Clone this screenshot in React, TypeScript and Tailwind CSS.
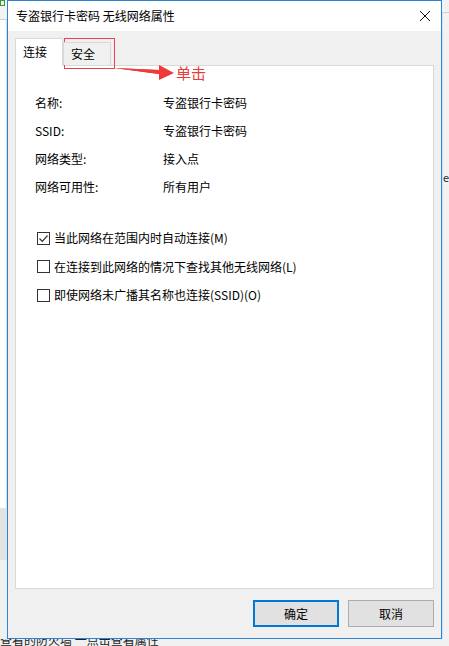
import React from "react";

const font = { fontFamily: "'Noto Sans CJK SC', 'Microsoft YaHei', sans-serif" };

function Check({ checked }: { checked?: boolean }) {
  return (
    <div className="w-[13px] h-[13px] border border-[#333333] bg-white flex items-center justify-center shrink-0">
      {checked && (
        <svg width="11" height="11" viewBox="0 0 11 11">
          <path d="M1.5 5.5 L4.3 8.3 L9.5 2.5" fill="none" stroke="#333" strokeWidth="1.2" />
        </svg>
      )}
    </div>
  );
}

export default function App() {
  const rows = [
    ["名称:", "专盗银行卡密码"],
    ["SSID:", "专盗银行卡密码"],
    ["网络类型:", "接入点"],
    ["网络可用性:", "所有用户"],
  ];
  const checks: [string, boolean][] = [
    ["当此网络在范围内时自动连接(M)", true],
    ["在连接到此网络的情况下查找其他无线网络(L)", false],
    ["即使网络未广播其名称也连接(SSID)(O)", false],
  ];
  return (
    <div className="w-[449px] h-[646px] overflow-hidden bg-[#f0f0f0] flex flex-col text-[12px] text-black" style={font}>
      <div className="flex h-[639px]">
        {/* left background strip */}
        <div className="w-[7px] flex flex-col bg-[#f3f3f3]">
          <div className="h-[20px] border-b border-[#d0d0d0] relative">
            <div className="absolute left-0 top-0 w-[5px] h-[6px] border border-[#3a9a3a] bg-[#e8f4e8]" />
          </div>
          <div className="h-[488px] bg-white border-r border-[#dcdcdc]" />
          <div className="h-[52px] bg-[#e2e2e2]" />
          <div className="flex-1 bg-[#f0f0f0]" />
        </div>
        {/* dialog */}
        <div className="w-[435px] border border-[#2b85d2] flex flex-col bg-[#f0f0f0] relative">
          <div className="h-[30px] bg-white flex items-center justify-between pl-[8px] pr-[10px]">
            <span className="text-[12px]">专盗银行卡密码 无线网络属性</span>
            <svg width="12" height="12" viewBox="0 0 12 12">
              <path d="M1 1 L11 11 M11 1 L1 11" stroke="#111" strokeWidth="1" />
            </svg>
          </div>
          <div className="flex-1 flex flex-col px-[7px] pt-[7px]">
            <div className="flex items-end h-[28px] relative z-10">
              <div className="w-[48px] h-[28px] bg-white border border-b-0 border-[#d9d9d9] flex items-center pl-[7px] pb-[2px]">连接</div>
              <div className="w-[48px] h-[23px] mb-[1px] bg-[#f0f0f0] border border-b-0 border-[#d9d9d9] flex items-center pl-[7px]">安全</div>
            </div>
            <div className="h-[524px] -mt-[1px] bg-white border border-[#d9d9d9] pt-[23px] pl-[19px]">
              {rows.map(([a, b]) => (
                <div key={a} className="h-[28px] flex items-center">
                  <div className="w-[128px]">{a}</div>
                  <div>{b}</div>
                </div>
              ))}
              <div className="h-[23px]" />
              {checks.map(([t, c]) => (
                <div key={t} className="h-[28.5px] flex items-center pl-[2px] gap-[4px]">
                  <Check checked={c} />
                  <span>{t}</span>
                </div>
              ))}
            </div>
            <div className="flex justify-end gap-[9px] pt-[11px]">
              <button className="w-[86px] h-[27px] bg-[#e1e1e1] border-2 border-[#0078d7] flex items-center justify-center">确定</button>
              <button className="w-[86px] h-[27px] bg-[#e1e1e1] border border-[#adadad] flex items-center justify-center">取消</button>
            </div>
          </div>
          {/* annotation */}
          <div className="absolute left-[56px] top-[37px] w-[51px] h-[31px] border border-[#e8434a]" />
          <svg className="absolute left-[56px] top-[55px]" width="120" height="30" viewBox="0 0 120 30">
            <path d="M50 12 L95 14 L95 9 L110 17 L95 24 L95 18 Z" fill="#ee3a3a" />
            <path d="M50 12 L95 14 L95 18 Z" fill="#ee3a3a" />
          </svg>
          <div className="absolute left-[168px] top-[64px] text-[15px] text-[#e83838] leading-none">单击</div>
        </div>
        {/* right background strip */}
        <div className="w-[7px] flex flex-col bg-[#f3f3f3] relative">
          <div className="h-[13px] border-b border-[#d0d0d0]" />
          <div className="absolute left-[1px] top-[172px] text-[11px] leading-none text-[#222]">e</div>
          <div className="flex-1 border-l border-[#cfe3f3]" />
        </div>
      </div>
      <div className="h-[7px] overflow-hidden bg-[#f0f0f0] relative">
        <div className="absolute left-0 -top-[5px] text-[12px] leading-none whitespace-nowrap text-[#222]">查看的防火墙 一点击查看属性</div>
      </div>
    </div>
  );
}
